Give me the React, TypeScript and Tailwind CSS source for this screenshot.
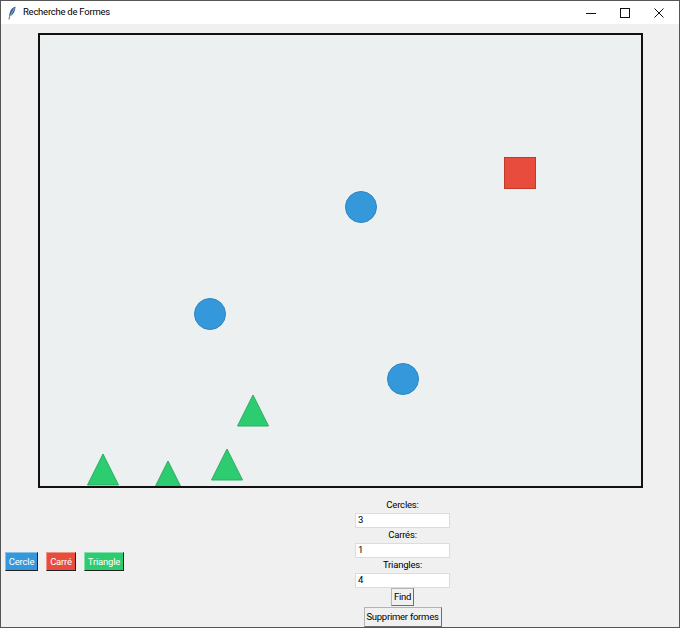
const font = { fontFamily: "Roboto, 'Liberation Sans', sans-serif" };

function TitleBar() {
  return (
    <div className="flex h-[23px] items-center bg-white">
      <svg width="10" height="14" viewBox="0 0 10 14" className="ml-[6px]">
        <path d="M8.5 0.5 C4 2 2.5 6 2.2 10 L1.5 13.5 L2.4 13.6 L3 10.5 C6 9 8.5 5 8.5 0.5 Z" fill="#2f5f94" />
        <path d="M7.5 2 L2.6 11" stroke="#cfe2f5" strokeWidth="0.6" />
      </svg>
      <span className="ml-[6px] text-[9.5px] tracking-[-0.25px] text-black">Recherche de Formes</span>
      <div className="ml-auto flex h-full">
        <div className="flex w-[34px] items-center justify-center">
          <svg width="10" height="10" viewBox="0 0 10 10">
            <path d="M0 5.5 H10" stroke="#111" strokeWidth="1" />
          </svg>
        </div>
        <div className="flex w-[34px] items-center justify-center">
          <svg width="10" height="10" viewBox="0 0 10 10">
            <rect x="0.5" y="0.5" width="9" height="9" fill="none" stroke="#111" strokeWidth="1" />
          </svg>
        </div>
        <div className="mr-[3px] flex w-[34px] items-center justify-center">
          <svg width="10" height="10" viewBox="0 0 10 10">
            <path d="M0.5 0.5 L9.5 9.5 M9.5 0.5 L0.5 9.5" stroke="#111" strokeWidth="1" />
          </svg>
        </div>
      </div>
    </div>
  );
}

function Canvas() {
  // page coordinates, inner drawing area starts at (40,35)
  const circles = [
    [361, 207],
    [210, 314],
    [403, 379],
  ];
  const triangles = [
    [253, 395],
    [227, 449],
    [103, 454],
    [168, 461],
  ];
  return (
    <div className="ml-[37px] mt-[9px] h-[455px] w-[605px] border-2 border-[#111] bg-[#ecf0f1]">
      <svg width="601" height="451" viewBox="40 35 601 451" className="block">
        <rect x="504.5" y="157.5" width="31" height="31" fill="#e74c3c" stroke="#c0392b" strokeWidth="1" />
        {circles.map(([cx, cy], i) => (
          <circle key={i} cx={cx} cy={cy} r="15.5" fill="#3498db" stroke="#2e86c1" strokeWidth="1" />
        ))}
        {triangles.map(([x, y], i) => (
          <polygon
            key={i}
            points={`${x},${y} ${x - 15.5},${y + 31} ${x + 15.5},${y + 31}`}
            fill="#2ecc71"
            stroke="#27ae60"
            strokeWidth="1"
          />
        ))}
      </svg>
    </div>
  );
}

function ColorButton({ label, bg, w }: { label: string; bg: string; w: string }) {
  return (
    <button
      className={`h-[19px] ${w} ${bg} whitespace-nowrap border-t border-l border-r border-b border-t-white/40 border-l-white/40 border-r-[#222] border-b-[#222] px-0 text-[9.5px] leading-none tracking-[-0.2px] text-white`}
    >
      {label}
    </button>
  );
}

function SysButton({ label, cls }: { label: string; cls: string }) {
  return (
    <button
      className={`${cls} whitespace-nowrap border border-[#b4b4b4] border-r-[#6e6e6e] border-b-[#6e6e6e] bg-[#f0f0f0] px-0 text-[9.5px] leading-none tracking-[-0.25px] text-black`}
    >
      {label}
    </button>
  );
}

function Field({ label, value }: { label: string; value: string }) {
  return (
    <>
      <div className="flex h-[15px] items-center text-[9.5px] tracking-[-0.2px] text-black">{label}</div>
      <div className="flex h-[15px] w-[95px] items-center border border-[#dcdcdc] bg-white pl-[2px] text-[9.5px] text-black">
        {value}
      </div>
    </>
  );
}

export default function App() {
  return (
    <div style={font} className="flex h-[628px] w-[680px] flex-col border border-[#555] bg-[#f0f0f0]">
      <TitleBar />
      <Canvas />
      <div className="mt-[10px] flex items-center">
        <div className="mb-[2px] ml-[4px] flex gap-[8px]">
          <ColorButton label="Cercle" bg="bg-[#3498db]" w="w-[33px]" />
          <ColorButton label="Carré" bg="bg-[#e74c3c]" w="w-[30px]" />
          <ColorButton label="Triangle" bg="bg-[#2ecc71]" w="w-[40px]" />
        </div>
        <div className="ml-[231px] flex w-[95px] flex-col items-center">
          <Field label="Cercles:" value="3" />
          <Field label="Carrés:" value="1" />
          <Field label="Triangles:" value="4" />
          <SysButton label="Find" cls="h-[18px] w-[23px]" />
          <SysButton label="Supprimer formes" cls="mt-[1px] h-[20px] w-[78px]" />
        </div>
      </div>
    </div>
  );
}
